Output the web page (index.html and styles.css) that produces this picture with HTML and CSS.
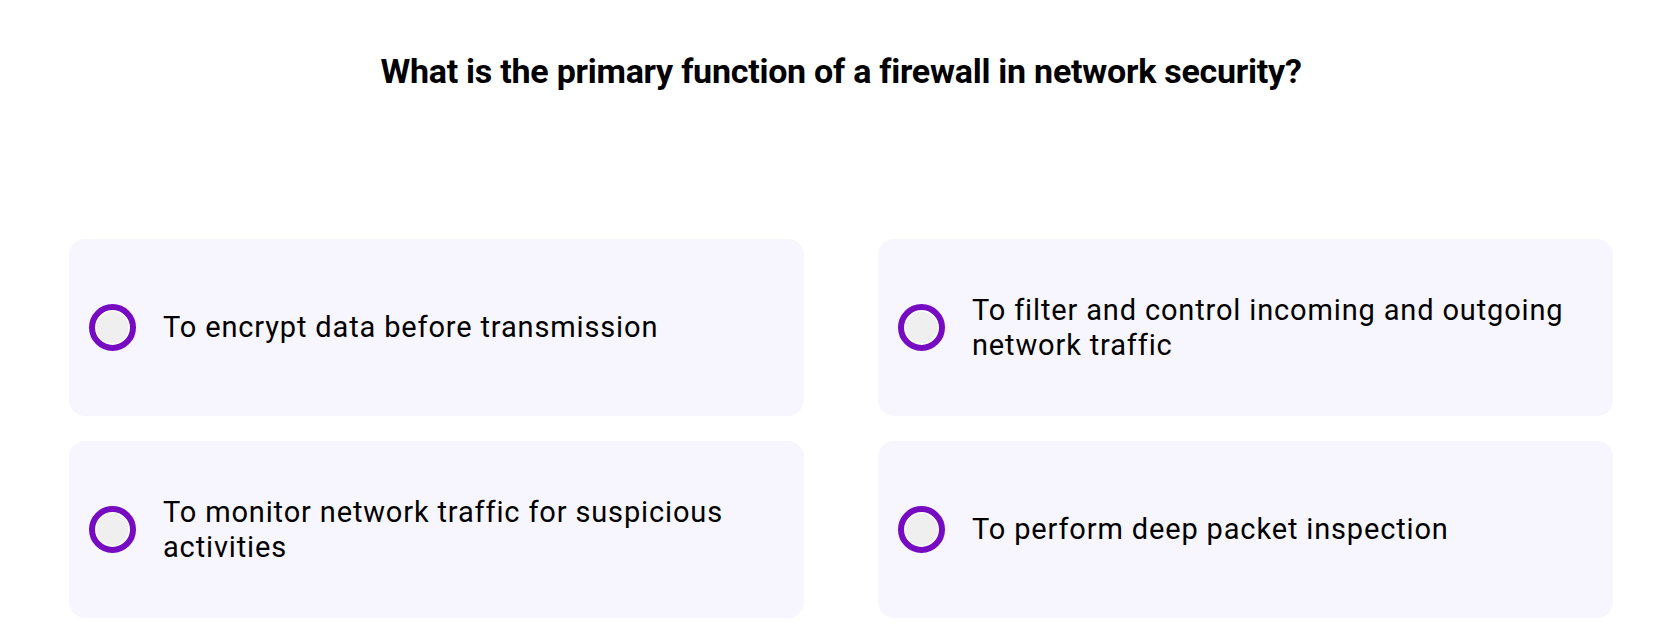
FILE: index.html
```html
<!DOCTYPE html>
<html lang="en">
<head>
<meta charset="utf-8">
<title>Quiz</title>
<link rel="stylesheet" href="styles.css">
</head>
<body>
<main class="quiz">
  <h1 class="question">What is the primary function of a firewall in network security?</h1>
  <div class="options">
    <label class="option"><span class="radio"></span><span class="option-text">To encrypt data before transmission</span></label>
    <label class="option"><span class="radio"></span><span class="option-text">To filter and control incoming and outgoing network traffic</span></label>
    <label class="option"><span class="radio"></span><span class="option-text">To monitor network traffic for suspicious activities</span></label>
    <label class="option"><span class="radio"></span><span class="option-text">To perform deep packet inspection</span></label>
  </div>
</main>
</body>
</html>
```

FILE: styles.css
```css
html, body {
  margin: 0;
  background: #ffffff;
}

body {
  font-family: Roboto, "Liberation Sans", Arial, sans-serif;
  color: #000000;
}

.quiz {
  padding: 0 50px 0 69px;
}

.question {
  margin: 0;
  padding-top: 51px;
  text-align: center;
  font-size: 34px;
  line-height: 40px;
  font-weight: 700;
  letter-spacing: -0.25px;
}

.options {
  margin-top: 148px;
  display: grid;
  grid-template-columns: 1fr 1fr;
  grid-auto-rows: 177px;
  column-gap: 74px;
  row-gap: 25px;
}

.option {
  display: flex;
  align-items: center;
  padding: 0 20px;
  background: #f7f6fe;
  border-radius: 16px;
}

.radio {
  flex: 0 0 auto;
  box-sizing: border-box;
  width: 47px;
  height: 47px;
  border: 6px solid #760bc2;
  border-radius: 50%;
  background: #efefef;
  box-shadow: inset 0 0 0 1.5px #ffffff;
  margin-right: 27px;
}

.option-text {
  font-size: 29px;
  line-height: 35px;
  letter-spacing: 0.85px;
}
```
